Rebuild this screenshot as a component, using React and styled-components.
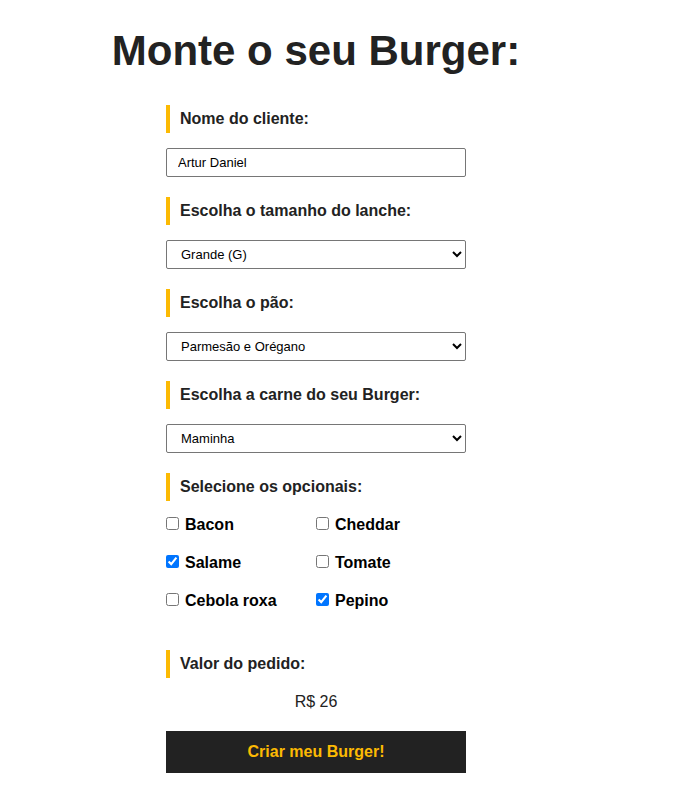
import React from "react";
import styled, { createGlobalStyle } from "styled-components";

const GlobalStyle = createGlobalStyle`
  body {
    margin: 0;
    font-family: "Liberation Sans", Arial, Helvetica, sans-serif;
    background: #fff;
  }
`;

const opcionais = [
  { nome: "Bacon", checked: false },
  { nome: "Cheddar", checked: false },
  { nome: "Salame", checked: true },
  { nome: "Tomate", checked: false },
  { nome: "Cebola roxa", checked: false },
  { nome: "Pepino", checked: true },
];

const App = () => {
  return (
    <Page>
      <GlobalStyle />
      <Title>Monte o seu Burger:</Title>
      <Form onSubmit={(e) => e.preventDefault()}>
        <Field>
          <Label htmlFor="nome">Nome do cliente:</Label>
          <TextInput id="nome" type="text" defaultValue="Artur Daniel" />
        </Field>
        <Field>
          <Label htmlFor="tamanho">Escolha o tamanho do lanche:</Label>
          <Select id="tamanho" defaultValue="G">
            <option value="P">Pequeno (P)</option>
            <option value="M">Médio (M)</option>
            <option value="G">Grande (G)</option>
          </Select>
        </Field>
        <Field>
          <Label htmlFor="pao">Escolha o pão:</Label>
          <Select id="pao" defaultValue="parmesao">
            <option value="italiano">Italiano Branco</option>
            <option value="parmesao">Parmesão e Orégano</option>
            <option value="integral">Integral</option>
          </Select>
        </Field>
        <Field>
          <Label htmlFor="carne">Escolha a carne do seu Burger:</Label>
          <Select id="carne" defaultValue="maminha">
            <option value="maminha">Maminha</option>
            <option value="alcatra">Alcatra</option>
            <option value="picanha">Picanha</option>
          </Select>
        </Field>
        <Field>
          <Label as="span">Selecione os opcionais:</Label>
          <Options>
            {opcionais.map((op) => (
              <OptionItem key={op.nome}>
                <input type="checkbox" defaultChecked={op.checked} />
                <span>{op.nome}</span>
              </OptionItem>
            ))}
          </Options>
        </Field>
        <Field>
          <Label as="span">Valor do pedido:</Label>
          <Price>R$ 26</Price>
        </Field>
        <SubmitButton type="submit">Criar meu Burger!</SubmitButton>
      </Form>
    </Page>
  );
};

export default App;

const Page = styled.div`
  width: 632px;
  padding-top: 27px;
  padding-bottom: 40px;
`;

const Title = styled.h1`
  margin: 0 0 30px;
  text-align: center;
  font-size: 42px;
  font-weight: bold;
  line-height: 48px;
  color: #222;
`;

const Form = styled.form`
  width: 300px;
  margin: 0 auto;
`;

const Field = styled.div`
  display: flex;
  flex-direction: column;
  margin-bottom: 20px;
`;

const Label = styled.label`
  display: block;
  align-self: flex-start;
  font-size: 16px;
  line-height: 18px;
  font-weight: bold;
  color: #222;
  padding: 5px 10px;
  margin-bottom: 15px;
  border-left: 4px solid #fcba03;
`;

const TextInput = styled.input`
  box-sizing: border-box;
  width: 100%;
  height: 29px;
  padding: 0 11px;
  border: 1px solid #767676;
  border-radius: 2px;
  font-family: "Liberation Sans", Arial, sans-serif;
  font-size: 13px;
  color: #000;
`;

const Select = styled.select`
  box-sizing: border-box;
  width: 100%;
  height: 29px;
  padding: 0 10px;
  border: 1px solid #767676;
  border-radius: 2px;
  background: #fff;
  font-family: "Liberation Sans", Arial, sans-serif;
  font-size: 13px;
  color: #000;
`;

const Options = styled.div`
  display: grid;
  grid-template-columns: 1fr 1fr;
  row-gap: 20px;
  padding-bottom: 20px;
`;

const OptionItem = styled.label`
  display: flex;
  align-items: flex-start;
  height: 18px;
  line-height: 18px;
  font-size: 16px;
  font-weight: bold;
  color: #000;

  input {
    width: 13px;
    height: 13px;
    margin: 1px 6px 0 0;
  }
`;

const Price = styled.p`
  margin: 0;
  text-align: center;
  font-size: 16px;
  line-height: 18px;
  color: #222;
`;

const SubmitButton = styled.button`
  display: block;
  width: 100%;
  height: 42px;
  border: none;
  background-color: #222;
  color: #fcba03;
  font-family: "Liberation Sans", Arial, sans-serif;
  font-size: 16px;
  font-weight: bold;
  cursor: pointer;
`;
